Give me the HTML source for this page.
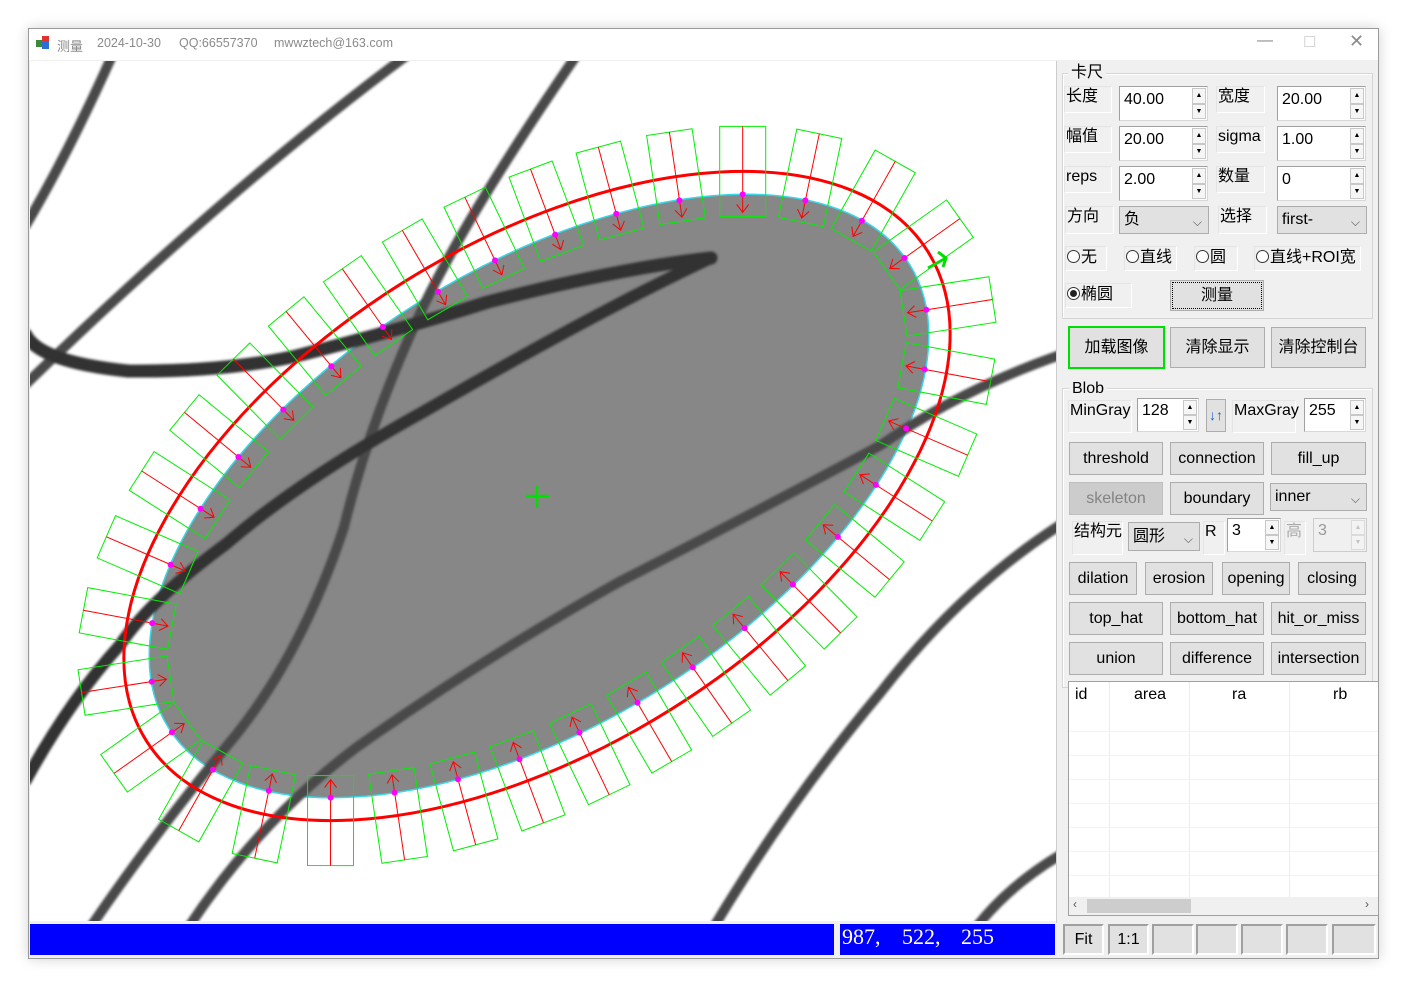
<!DOCTYPE html>
<html><head><meta charset="utf-8"><style>
*{box-sizing:border-box;margin:0;padding:0}
body{width:1406px;height:986px;background:#fff;position:relative;overflow:hidden;font-family:"Liberation Sans","Noto Sans CJK SC",sans-serif;}
.win{position:absolute;left:28px;top:28px;width:1351px;height:931px;border:1px solid #9a9a9a;background:#f0f0f0;box-shadow:0 0 12px rgba(0,0,0,.18)}
.title{position:absolute;left:29px;top:29px;width:1349px;height:31px;background:#fff;font-size:12.5px;color:#8a8a8a}
.title span{position:absolute;top:7px}
.a{position:absolute}
.lbl{position:absolute;font-size:16px;color:#000;border:1px solid;border-color:#e4e4e4 #fff #fff #e4e4e4;line-height:20px;padding-left:1px;white-space:nowrap}
.inp{position:absolute;background:#fff;border:1px solid #a0a0a0;border-right-color:#d8d8d8;border-bottom-color:#d8d8d8;font-size:16px;line-height:22px;padding:2px 4px}
.spin{position:absolute;right:1px;top:1px;width:14px;bottom:1px;background:#f0f0f0}
.spin i{position:absolute;left:0;width:14px;height:50%;border:1px solid #c8c8c8;background:#f6f6f6;font-style:normal;font-size:7px;text-align:center;line-height:14px}
.spin i:first-child{top:0}.spin i:last-child{bottom:0}
.btn{position:absolute;background:#e1e1e1;border:1px solid #adadad;font-size:16px;text-align:center;color:#000;white-space:nowrap}
.cmb{position:absolute;background:#e1e1e1;border:1px solid #adadad;font-size:16px;padding-left:4px;white-space:nowrap}
.cmb:after{content:"⌵";position:absolute;right:6px;top:2px;font-size:12px;color:#555}
.rad{position:absolute;font-size:16px;border:1px solid;border-color:#e4e4e4 #fff #fff #e4e4e4;white-space:nowrap;line-height:22px}
.rad b{display:inline-block;width:13px;height:13px;border:1px solid #333;border-radius:50%;vertical-align:-1px;margin:0 1px 0 1px;background:#fff;position:relative}
.grp{position:absolute;border:1px solid #d5d5d5;box-shadow:inset 1px 1px 0 #fff}
.grpl{position:absolute;background:#f0f0f0;font-size:16px;padding:0 3px;line-height:18px}
.sb{position:absolute;border:2px solid;border-color:#a0a0a0 #fff #fff #a0a0a0;background:#e1e1e1;font-size:16px;text-align:center;line-height:27px}
.st{position:absolute;top:924px;color:#fff;font-family:'Liberation Serif',serif;font-size:22px;line-height:26px}
</style></head><body>
<div class="win"></div>
<div class="title">
<svg class="a" style="left:6px;top:5px" width="16" height="16"><rect x="1" y="6" width="7" height="7" fill="#3a8a3a"/><rect x="7" y="2" width="7" height="7" fill="#d33"/><rect x="7" y="8" width="7" height="7" fill="#2b6fd6"/></svg>
<span style="left:28px;font-size:13px">测量</span><span style="left:68px">2024-10-30</span><span style="left:150px">QQ:66557370</span><span style="left:245px">mwwztech@163.com</span>
<span style="left:1228px;top:3px;font-size:16px">—</span><span style="left:1274px;top:4px;font-size:15px;color:#ccc">☐</span><span style="left:1320px;top:2px;font-size:18px">✕</span>
</div>
<div class="a" style="left:30px;top:61px;width:1026px;height:860px;background:#fff;overflow:hidden">
<svg id="img" width="1026" height="860" viewBox="30 61 1026 860">
<defs><filter id="bl"><feGaussianBlur stdDeviation="1.3"/></filter></defs>
<ellipse cx="539" cy="496" rx="437" ry="228" transform="rotate(-32 539 496)" fill="#878787" stroke="#38d8e8" stroke-width="1.5"/>
<g fill="none" stroke-linecap="round" filter="url(#bl)">
<path d="M112 56 Q70 150 26 225" stroke="#4a4a4a" stroke-width="10"/>
<path d="M406 56 Q226 190 26 384" stroke="#4a4a4a" stroke-width="10"/>
<path d="M576 56 Q470 210 423 307 Q370 420 344 527 Q300 660 226 747 Q150 840 92 925" stroke="#4a4a4a" stroke-width="10"/>
<path d="M26 335 Q40 362 128 371 Q220 372 292 357 Q400 330 488 302 Q620 268 711 258" stroke="#303030" stroke-width="13"/>
<path d="M711 258 Q600 310 423 412 Q300 480 226 544 Q150 600 120 645 Q70 700 26 780" stroke="#303030" stroke-width="12"/>
<path d="M1060 355 Q960 390 881 445 Q760 510 619 582 Q480 660 357 747 Q260 820 190 925" stroke="#4a4a4a" stroke-width="10"/>
<path d="M1060 525 Q960 590 881 692 Q790 800 715 925" stroke="#4a4a4a" stroke-width="10"/>
<path d="M1060 855 Q1010 885 978 925" stroke="#4a4a4a" stroke-width="10"/>
</g>
<ellipse cx="537" cy="496" rx="461" ry="252" transform="rotate(-32 537 496)" fill="none" stroke="#ff0000" stroke-width="3"/>
<g id="rois"></g>
<path d="M537 485v23M526 496h23" stroke="#00e000" stroke-width="2.5"/>
<path d="M928 268l18-10M938 252l8 6-3 9" stroke="#00e000" stroke-width="3" fill="none"/>
</svg></div>
<script>
(function(){
var g=document.getElementById('rois'),cx=537,cy=496,th=-32*Math.PI/180,c=Math.cos(th),s=Math.sin(th);
function P(a,b,t){return [cx+a*Math.cos(t)*c-b*Math.sin(t)*s,cy+a*Math.cos(t)*s+b*Math.sin(t)*c];}
var N=3000,pts=[],L=[0];for(var i=0;i<=N;i++){pts.push(P(461,252,i/N*2*Math.PI));if(i>0){var d=Math.hypot(pts[i][0]-pts[i-1][0],pts[i][1]-pts[i-1][1]);L.push(L[i-1]+d);}}
var tot=L[N],mi=0;for(i=0;i<N;i++)if(pts[i][1]<pts[mi][1])mi=i;
var h='',K=34;
for(var k=0;k<K;k++){var tg=(L[mi]+k*tot/K)%tot,j=0;while(L[j+1]<tg)j++;
var p=pts[j],q=pts[(j+1)%N],tx=q[0]-p[0],ty=q[1]-p[1],ln=Math.hypot(tx,ty);tx/=ln;ty/=ln;
var nx=ty,ny=-tx;if(nx*(p[0]-cx)+ny*(p[1]-cy)<0){nx=-nx;ny=-ny;}
var A=45,W=23;function pt(u,v){return (p[0]+u*nx+v*tx).toFixed(1)+','+(p[1]+u*ny+v*ty).toFixed(1);}
h+='<polygon points="'+pt(A,W)+' '+pt(A,-W)+' '+pt(-A,-W)+' '+pt(-A,W)+'" fill="none" stroke="#00ee00" stroke-width="1"/>';
h+='<path d="M'+pt(A,0)+'L'+pt(-A+4,0)+'M'+pt(-A+12,6)+'L'+pt(-A+4,0)+'L'+pt(-A+12,-6)+'" stroke="#ff0000" fill="none" stroke-width="1"/>';
for(var m=0;m<70;m++){var x=p[0]-m*nx,y=p[1]-m*ny,dx=x-539,dy=y-496,u=dx*c+dy*s,v=-dx*s+dy*c;if((u/437)*(u/437)+(v/228)*(v/228)<=1){h+='<circle cx="'+x.toFixed(1)+'" cy="'+y.toFixed(1)+'" r="3" fill="#ff00ff"/>';break;}}
}
g.innerHTML=h;})();
</script>
<div class="a" style="left:1056px;top:61px;width:3px;height:862px;background:#f0f0f0;border-left:1px solid #ccc"></div>
<!-- status -->
<div class="a" style="left:30px;top:924px;width:804px;height:31px;background:#0000ff"></div>
<div class="a" style="left:840px;top:924px;width:215px;height:31px;background:#0000ff"></div>
<span class="st" style="left:842px">987,</span><span class="st" style="left:902px">522,</span><span class="st" style="left:961px">255</span>
<div class="sb" style="left:1063px;top:924px;width:41px;height:31px">Fit</div>
<div class="sb" style="left:1108px;top:924px;width:41px;height:31px">1:1</div>
<div class="sb" style="left:1152px;top:924px;width:42px;height:31px"></div>
<div class="sb" style="left:1196px;top:924px;width:42px;height:31px"></div>
<div class="sb" style="left:1241px;top:924px;width:42px;height:31px"></div>
<div class="sb" style="left:1286px;top:924px;width:42px;height:31px"></div>
<div class="sb" style="left:1332px;top:924px;width:44px;height:31px"></div>
<!-- 卡尺 group -->
<div class="grp" style="left:1062px;top:73px;width:311px;height:246px"></div>
<div class="grpl" style="left:1068px;top:64px">卡尺</div>
<div class="lbl" style="left:1064px;top:86px;width:48px;height:27px">长度</div>
<div class="inp" style="left:1119px;top:86px;width:89px;height:35px">40.00<div class="spin"><i>▲</i><i>▼</i></div></div>
<div class="lbl" style="left:1216px;top:86px;width:49px;height:27px">宽度</div>
<div class="inp" style="left:1277px;top:86px;width:89px;height:35px">20.00<div class="spin"><i>▲</i><i>▼</i></div></div>
<div class="lbl" style="left:1064px;top:126px;width:48px;height:27px">幅值</div>
<div class="inp" style="left:1119px;top:126px;width:89px;height:35px">20.00<div class="spin"><i>▲</i><i>▼</i></div></div>
<div class="lbl" style="left:1216px;top:126px;width:49px;height:27px">sigma</div>
<div class="inp" style="left:1277px;top:126px;width:89px;height:35px">1.00<div class="spin"><i>▲</i><i>▼</i></div></div>
<div class="lbl" style="left:1064px;top:166px;width:48px;height:27px">reps</div>
<div class="inp" style="left:1119px;top:166px;width:89px;height:35px">2.00<div class="spin"><i>▲</i><i>▼</i></div></div>
<div class="lbl" style="left:1216px;top:166px;width:49px;height:27px">数量</div>
<div class="inp" style="left:1277px;top:166px;width:89px;height:35px">0<div class="spin"><i>▲</i><i>▼</i></div></div>
<div class="lbl" style="left:1065px;top:206px;width:49px;height:28px">方向</div>
<div class="cmb" style="left:1119px;top:206px;width:90px;height:28px;line-height:26px">负</div>
<div class="lbl" style="left:1218px;top:206px;width:49px;height:28px">选择</div>
<div class="cmb" style="left:1277px;top:206px;width:90px;height:28px;line-height:26px">first-</div>
<div class="rad" style="left:1065px;top:246px;width:42px;height:25px"><b></b>无</div>
<div class="rad" style="left:1124px;top:246px;width:53px;height:25px"><b></b>直线</div>
<div class="rad" style="left:1194px;top:246px;width:44px;height:25px"><b></b>圆</div>
<div class="rad" style="left:1254px;top:246px;width:107px;height:25px"><b></b>直线+ROI宽</div>
<div class="rad" style="left:1065px;top:283px;width:67px;height:25px"><b><span style="position:absolute;left:2px;top:2px;width:7px;height:7px;border-radius:50%;background:#222"></span></b>椭圆</div>
<div class="btn" style="left:1170px;top:280px;width:94px;height:31px;line-height:29px;outline:1px dotted #000;outline-offset:-3px">测量</div>
<div class="btn" style="left:1068px;top:326px;width:97px;height:43px;line-height:40px;border:2px solid #00e000">加载图像</div>
<div class="btn" style="left:1170px;top:327px;width:95px;height:41px;line-height:39px">清除显示</div>
<div class="btn" style="left:1271px;top:327px;width:95px;height:41px;line-height:39px">清除控制台</div>
<!-- Blob group -->
<div class="grp" style="left:1062px;top:388px;width:311px;height:300px"></div>
<div class="grpl" style="left:1069px;top:380px">Blob</div>
<div class="lbl" style="left:1068px;top:400px;width:64px;height:33px">MinGray</div>
<div class="inp" style="left:1137px;top:398px;width:62px;height:34px;padding-top:1px">128<div class="spin"><i>▲</i><i>▼</i></div></div>
<div class="btn" style="left:1206px;top:399px;width:20px;height:33px;line-height:31px;font-size:14px;color:#2060c0">↓↑</div>
<div class="lbl" style="left:1232px;top:400px;width:64px;height:33px">MaxGray</div>
<div class="inp" style="left:1304px;top:398px;width:62px;height:34px;padding-top:1px">255<div class="spin"><i>▲</i><i>▼</i></div></div>
<div class="btn" style="left:1069px;top:442px;width:94px;height:33px;line-height:31px">threshold</div>
<div class="btn" style="left:1170px;top:442px;width:94px;height:33px;line-height:31px">connection</div>
<div class="btn" style="left:1271px;top:442px;width:95px;height:33px;line-height:31px">fill_up</div>
<div class="btn" style="left:1069px;top:482px;width:94px;height:33px;line-height:31px;background:#cccccc;border-color:#bfbfbf;color:#838383">skeleton</div>
<div class="btn" style="left:1170px;top:482px;width:94px;height:33px;line-height:31px">boundary</div>
<div class="cmb" style="left:1270px;top:483px;width:97px;height:28px;line-height:26px">inner</div>
<div class="lbl" style="left:1072px;top:521px;width:51px;height:34px">结构元</div>
<div class="cmb" style="left:1128px;top:522px;width:72px;height:29px;line-height:28px">圆形</div>
<div class="lbl" style="left:1203px;top:521px;width:22px;height:34px">R</div>
<div class="inp" style="left:1227px;top:518px;width:54px;height:34px;padding-top:1px">3<div class="spin"><i>▲</i><i>▼</i></div></div>
<div class="lbl" style="left:1284px;top:521px;width:22px;height:34px;color:#aaa">高</div>
<div class="inp" style="left:1313px;top:518px;width:54px;height:34px;padding-top:1px;background:#f0f0f0;color:#999;border-color:#ccc">3<div class="spin" style="opacity:.5"><i>▲</i><i>▼</i></div></div>
<div class="btn" style="left:1069px;top:562px;width:68px;height:33px;line-height:31px">dilation</div>
<div class="btn" style="left:1145px;top:562px;width:68px;height:33px;line-height:31px">erosion</div>
<div class="btn" style="left:1222px;top:562px;width:68px;height:33px;line-height:31px">opening</div>
<div class="btn" style="left:1298px;top:562px;width:68px;height:33px;line-height:31px">closing</div>
<div class="btn" style="left:1069px;top:602px;width:94px;height:33px;line-height:31px">top_hat</div>
<div class="btn" style="left:1170px;top:602px;width:94px;height:33px;line-height:31px">bottom_hat</div>
<div class="btn" style="left:1271px;top:602px;width:95px;height:33px;line-height:31px">hit_or_miss</div>
<div class="btn" style="left:1069px;top:642px;width:94px;height:33px;line-height:31px">union</div>
<div class="btn" style="left:1170px;top:642px;width:94px;height:33px;line-height:31px">difference</div>
<div class="btn" style="left:1271px;top:642px;width:95px;height:33px;line-height:31px">intersection</div>
<!-- table -->
<div class="a" style="left:1068px;top:681px;width:311px;height:235px;background:#fff;border:1px solid #a0a0a0;overflow:hidden">
<div class="a" style="left:0;top:0;width:311px;height:28px;font-size:16px;line-height:26px">
<span class="a" style="left:6px">id</span><span class="a" style="left:65px">area</span><span class="a" style="left:163px">ra</span><span class="a" style="left:264px">rb</span></div>
<div class="a" style="left:40px;top:0;width:1px;height:215px;background:#ececec"></div>
<div class="a" style="left:120px;top:0;width:1px;height:215px;background:#ececec"></div>
<div class="a" style="left:220px;top:0;width:1px;height:215px;background:#ececec"></div>
<div class="a" style="left:0;top:49px;width:311px;height:1px;background:#f2f2f2"></div>
<div class="a" style="left:0;top:73px;width:311px;height:1px;background:#f2f2f2"></div>
<div class="a" style="left:0;top:97px;width:311px;height:1px;background:#f2f2f2"></div>
<div class="a" style="left:0;top:121px;width:311px;height:1px;background:#f2f2f2"></div>
<div class="a" style="left:0;top:145px;width:311px;height:1px;background:#f2f2f2"></div>
<div class="a" style="left:0;top:169px;width:311px;height:1px;background:#f2f2f2"></div>
<div class="a" style="left:0;top:193px;width:311px;height:1px;background:#f2f2f2"></div>
<div class="a" style="left:0;top:215px;width:311px;height:18px;background:#f0f0f0;font-size:12px;color:#555">
<span class="a" style="left:4px;top:0">‹</span><div class="a" style="left:18px;top:2px;width:104px;height:14px;background:#cdcdcd"></div><span class="a" style="left:296px;top:0">›</span></div>
</div>
</body></html>
